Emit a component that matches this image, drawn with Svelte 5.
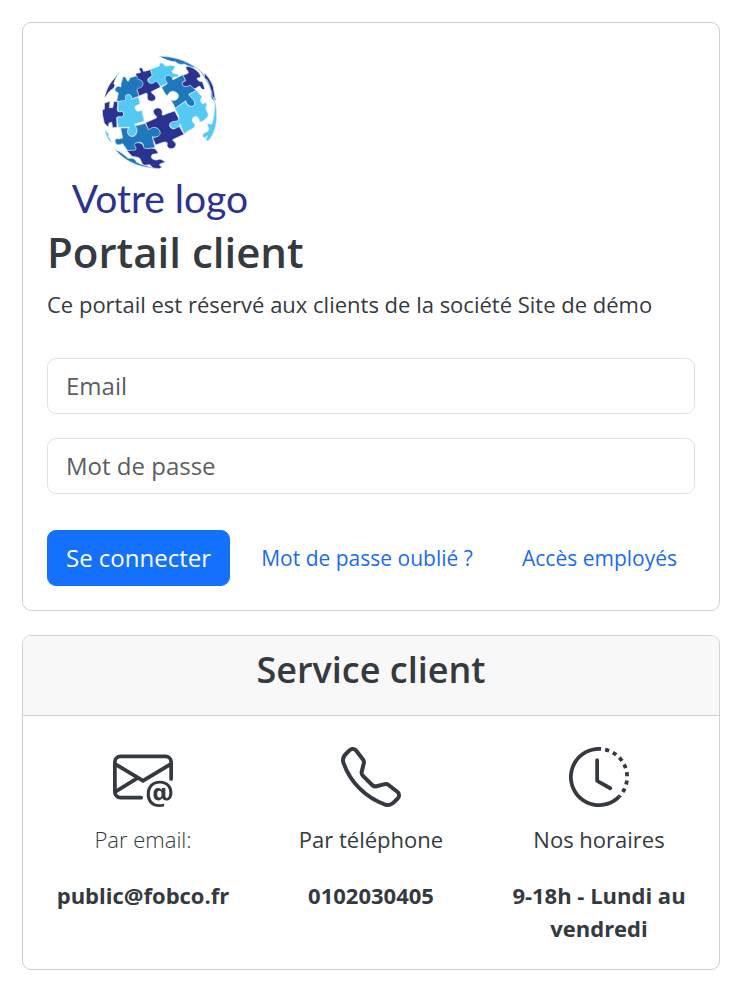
<script lang="ts">
  let email = ''
  let password = ''

  // Puzzle pieces of the globe, back to front.
  const NAVY = '#2b328f'
  const BLUE = '#1f78bc'
  const SKY = '#54c9f3'

  const pieces = [
    { fill: BLUE, d: 'M207 34 C244 33 290 46 320 70 C306 66 292 63 283 57 C274 60 262 57 258 51 C242 50 222 43 207 34 Z' },
    { fill: BLUE, d: 'M314 64 C342 83 364 115 374 152 L378 166 L370 166 L364 158 C362 148 365 143 361 132 C353 111 338 84 314 64 Z' },
    { fill: SKY, d: 'M370 152 C379 179 383 211 378 237 C374 258 366 275 356 286 C353 290 347 287 349 281 L353 272 C346 279 339 279 338 272 C338 265 345 263 352 260 C359 254 357 247 353 243 C350 235 359 234 364 239 C375 219 376 179 370 152 Z' },
    { fill: SKY, d: 'M181 73 L204 65 C211 63 206 56 213 54 C222 54 221 61 227 63 C235 64 244 59 254 64 C257 73 246 73 246 80 C249 88 259 85 266 90 C267 97 252 94 247 100 L249 108 L214 124 L207 119 C200 115 194 126 182 119 C172 113 171 101 181 97 C187 94 187 88 181 73 Z' },
    { fill: NAVY, d: 'M138 85 L151 83 C153 78 146 75 148 70 C151 66 158 68 159 74 C158 80 162 79 168 78 L181 74 L186 91 C184 98 172 97 173 106 C175 118 188 118 194 111 C202 106 207 119 212 126 L184 140 C183 146 198 150 197 159 C196 169 180 173 173 163 C170 155 175 147 169 144 L147 153 L137 124 Z' },
    { fill: BLUE, d: 'M93 116 C98 104 96 95 103 95 C112 98 108 108 115 109 L120 98 L138 93 C145 91 139 105 148 104 C157 105 162 114 157 123 C152 133 142 126 141 134 L147 154 L124 162 L124 170 L80 169 L85 145 C82 138 74 142 75 134 C77 124 85 122 93 126 Z' },
    { fill: NAVY, d: 'M88 82 C77 99 73 108 71 117 C79 119 72 128 67 133 C57 136 52 150 44 159 C48 135 58 117 69 105 Z' },
    { fill: NAVY, d: 'M44 174 L60 169 L58 188 L68 188 L72 169 L83 170 L82 195 C82 203 89 198 96 199 C104 203 102 217 95 216 C87 216 81 213 80 219 L81 247 L68 248 L65 232 L57 234 L55 246 L43 235 L38 211 L37 195 L43 193 Z' },
    { fill: SKY, d: 'M84 170 L105 166 C111 164 101 153 110 149 C119 145 130 154 123 163 L145 156 L150 174 C149 182 135 177 135 188 C137 200 147 202 155 195 L163 229 L133 237 C145 246 143 269 128 274 C115 275 107 261 118 247 L85 247 L81 218 C87 212 95 220 99 213 C104 203 98 197 90 201 C82 202 85 185 84 170 Z' },
    { fill: BLUE, d: 'M215 127 L230 118 C238 113 220 107 227 95 C236 86 249 95 248 105 L279 89 L286 105 C288 111 277 105 277 116 C280 126 291 126 300 119 L306 122 L318 137 L296 148 C300 157 318 164 314 178 C307 191 291 182 287 167 L256 190 L243 164 C255 171 268 161 265 149 C259 138 242 134 236 146 C228 159 229 146 223 142 Z' },
    { fill: NAVY, d: 'M279 91 L292 86 C303 81 280 71 291 64 C303 64 317 73 327 84 C333 92 334 98 322 99 C319 103 326 111 337 110 L344 130 C341 139 333 130 329 123 C321 125 316 135 309 128 L300 120 C291 128 275 125 277 115 C278 107 290 111 286 104 Z' },
    { fill: NAVY, d: 'M343 84 C354 94 365 111 370 126 L375 158 C368 161 365 149 366 141 C360 133 360 116 350 103 L344 100 Z' },
    { fill: SKY, d: 'M255 191 L286 169 C290 185 306 190 314 178 C318 163 296 158 298 147 L321 136 C326 147 330 149 336 155 C328 165 333 175 340 177 C346 170 350 175 350 181 C344 189 350 194 355 210 C350 221 341 229 329 231 C328 221 322 211 313 215 C305 219 303 229 313 236 C318 245 309 251 300 254 L282 266 L270 236 C269 247 259 255 247 249 C234 244 237 227 253 229 C264 230 268 222 267 214 Z' },
    { fill: NAVY, d: 'M167 233 L199 219 C205 214 186 209 191 195 C202 183 217 190 217 202 C213 214 222 211 230 206 L254 198 L265 219 C267 230 256 228 248 230 C235 233 236 247 247 251 C256 256 269 237 271 250 L282 268 L250 283 C241 287 262 290 257 302 C252 313 235 315 231 302 C235 290 228 290 219 292 L197 300 L187 276 C198 279 210 272 208 260 C207 247 190 245 181 256 L175 254 Z' },
    { fill: BLUE, d: 'M92 249 L116 249 C108 260 113 274 127 275 C143 273 145 249 135 243 L166 235 L176 255 C185 244 203 244 210 259 C214 273 199 279 187 275 L195 308 L163 312 C155 307 167 297 151 292 C137 291 133 301 139 311 C139 320 123 320 112 316 L98 296 C91 298 80 303 77 294 C72 284 78 279 86 282 L98 279 Z' },
    { fill: NAVY, d: 'M110 317 L136 315 C144 310 130 304 135 296 C145 290 158 294 160 304 C161 314 173 310 184 310 L195 311 L204 322 C202 331 187 323 184 333 C183 343 195 347 204 344 C212 340 218 346 226 351 C217 354 208 357 208 360 L216 367 L207 371 L188 369 L180 359 L162 361 C151 354 155 339 143 337 L126 334 Z' },
    { fill: BLUE, d: 'M75 313 C91 320 105 331 114 340 C129 339 137 342 139 351 L153 358 L190 369 C148 368 102 348 75 313 Z' },
    { fill: SKY, d: 'M45 254 L57 268 L55 274 L65 290 C57 290 47 271 45 254 Z' }
  ]

  const contacts = [
    { icon: 'email', label: 'Par email:', value: 'public@fobco.fr', light: true },
    { icon: 'phone', label: 'Par téléphone', value: '0102030405', light: false },
    { icon: 'clock', label: 'Nos horaires', value: '9-18h - Lundi au vendredi', light: false }
  ]
</script>

<main>
  <section class="card login">
    <svg class="logo" viewBox="-129 6 672 540" role="img" aria-label="Votre logo">
      {#each pieces as piece}
        <path d={piece.d} fill={piece.fill} />
      {/each}
      <text x="-55" y="505">Votre logo</text>
    </svg>
    <h1>Portail client</h1>
    <p class="intro">Ce portail est réservé aux clients de la société Site de démo</p>

    <form on:submit|preventDefault>
      <input type="email" placeholder="Email" aria-label="Email" bind:value={email} />
      <input type="password" placeholder="Mot de passe" aria-label="Mot de passe" bind:value={password} />
      <div class="actions">
        <button type="submit">Se connecter</button>
        <a href="#oubli">Mot de passe oublié ?</a>
        <a href="#employes">Accès employés</a>
      </div>
    </form>
  </section>

  <section class="card">
    <header>
      <h2>Service client</h2>
    </header>
    <div class="contacts">
      {#each contacts as contact}
        <div class="contact">
          <svg class="icon" viewBox="0 0 16 16" aria-hidden="true">
            {#if contact.icon === 'email'}
              <path d="M2 2a2 2 0 0 0-2 2v8.01A2 2 0 0 0 2 14h5.5a.5.5 0 0 0 0-1H2a1 1 0 0 1-.966-.741l5.64-3.471L8 9.583l7-4.2V8.5a.5.5 0 0 0 1 0V4a2 2 0 0 0-2-2H2Zm3.708 6.208L1 11.105V5.383l4.708 2.825ZM1 4.217V4a1 1 0 0 1 1-1h12a1 1 0 0 1 1 1v.217l-7 4.2-7-4.2Z" />
              <path d="M14.247 14.269c1.01 0 1.587-.857 1.587-2.025v-.21C15.834 10.43 14.64 9 12.52 9h-.035C10.42 9 9 10.36 9 12.432v.214C9 14.82 10.438 16 12.358 16h.044c.594 0 1.018-.074 1.237-.175v-.73c-.245.11-.673.18-1.18.18h-.044c-1.334 0-2.571-.788-2.571-2.655v-.157c0-1.657 1.058-2.724 2.64-2.724h.04c1.535 0 2.484 1.05 2.484 2.326v.118c0 .975-.324 1.39-.639 1.39-.232 0-.41-.148-.41-.42v-2.19h-.906v.569h-.03c-.084-.298-.368-.63-.954-.63-.778 0-1.259.555-1.259 1.4v.528c0 .892.49 1.434 1.26 1.434.471 0 .896-.227 1.014-.643h.043c.118.42.617.648 1.12.648Zm-2.453-1.588v-.227c0-.546.227-.791.573-.791.297 0 .572.192.572.708v.367c0 .573-.253.744-.564.744-.354 0-.581-.215-.581-.8Z" />
            {:else if contact.icon === 'phone'}
              <path d="M3.654 1.328a.678.678 0 0 0-1.015-.063L1.605 2.3c-.483.484-.661 1.169-.45 1.77a17.568 17.568 0 0 0 4.168 6.608 17.569 17.569 0 0 0 6.608 4.168c.601.211 1.286.033 1.77-.45l1.034-1.034a.678.678 0 0 0-.063-1.015l-2.307-1.794a.678.678 0 0 0-.58-.122l-2.19.547a1.745 1.745 0 0 1-1.657-.459L5.482 8.062a1.745 1.745 0 0 1-.46-1.657l.548-2.19a.678.678 0 0 0-.122-.58L3.654 1.328zM1.884.511a1.745 1.745 0 0 1 2.612.163L6.29 2.98c.329.423.445.974.315 1.494l-.547 2.19a.678.678 0 0 0 .178.643l2.457 2.457a.678.678 0 0 0 .644.178l2.189-.547a1.745 1.745 0 0 1 1.494.315l2.306 1.794c.829.645.905 1.87.163 2.611l-1.034 1.034c-.74.74-1.846 1.065-2.877.702a18.634 18.634 0 0 1-7.01-4.42 18.634 18.634 0 0 1-4.42-7.009c-.362-1.03-.037-2.137.703-2.877L1.885.511z" />
            {:else}
              <path d="M8.515 1.019A7 7 0 0 0 8 1V0a8 8 0 0 1 .589.022l-.074.997zm2.004.45a7.003 7.003 0 0 0-.985-.299l.219-.976c.383.086.76.2 1.126.342l-.36.933zm1.37.71a7.01 7.01 0 0 0-.439-.27l.493-.87a8.025 8.025 0 0 1 .979.654l-.615.789a6.996 6.996 0 0 0-.418-.302zm1.834 1.79a6.99 6.99 0 0 0-.653-.796l.724-.69c.27.285.52.59.747.91l-.818.576zm.744 1.352a7.08 7.08 0 0 0-.214-.468l.893-.45a7.976 7.976 0 0 1 .45 1.088l-.95.313a7.023 7.023 0 0 0-.179-.483zm.53 2.507a6.991 6.991 0 0 0-.1-1.025l.985-.17c.067.386.106.778.116 1.17l-1 .025zm-.131 1.538c.033-.17.06-.339.081-.51l.993.123a7.957 7.957 0 0 1-.23 1.155l-.964-.267c.046-.165.086-.332.12-.501zm-.952 2.379c.184-.29.346-.594.486-.908l.914.405c-.16.36-.345.706-.555 1.038l-.845-.535zm-.964 1.205c.122-.122.239-.248.35-.378l.758.653a8.073 8.073 0 0 1-.401.432l-.707-.707z" />
              <path d="M8 1a7 7 0 1 0 4.95 11.95l.707.707A8.001 8.001 0 1 1 8 0v1z" />
              <path d="M7.5 3a.5.5 0 0 1 .5.5v5.21l3.248 1.856a.5.5 0 0 1-.496.868l-3.5-2A.5.5 0 0 1 7 9V3.5a.5.5 0 0 1 .5-.5z" />
            {/if}
          </svg>
          <p class:light={contact.light}>{contact.label}</p>
          <p><strong>{contact.value}</strong></p>
        </div>
      {/each}
    </div>
  </section>
</main>

<style>
  :global(body) {
    margin: 0;
    background: #fff;
    color: #343a40;
    font-family: 'Open Sans', 'Noto Sans', sans-serif;
    font-size: 22px;
    line-height: 33px;
  }

  main {
    display: flex;
    flex-direction: column;
    gap: 24px;
    padding: 22px;
  }

  .card {
    border: 1px solid #d0d0d0;
    border-radius: 9px;
    overflow: hidden;
  }

  .login {
    padding: 24px;
  }

  .logo {
    display: block;
    width: 224px;
    height: 180px;
  }

  .logo path {
    stroke: #d3e9f6;
    stroke-width: 2;
    stroke-linejoin: round;
  }

  .logo text {
    fill: #2b328f;
    font-family: Lato, sans-serif;
    font-size: 117px;
  }

  h1,
  h2 {
    margin: 0;
    font-weight: 600;
  }

  h1 {
    font-size: 42px;
    line-height: 50px;
  }

  .intro {
    margin: 11px 0 37px;
  }

  form {
    display: flex;
    flex-direction: column;
    gap: 24px;
  }

  input,
  button {
    box-sizing: border-box;
    height: 56px;
    padding: 0 18px 2px;
    border-radius: 9px;
    font-family: inherit;
    font-size: 24px;
  }

  input {
    width: 100%;
    border: 1px solid #dee2e6;
    background: #fff;
    color: #343a40;
  }

  input::placeholder {
    color: #5b5e62;
    opacity: 1;
  }

  .actions {
    display: flex;
    align-items: center;
    justify-content: space-between;
    margin-top: 12px;
  }

  button {
    border: 1px solid #1371fd;
    background: #1371fd;
    color: #fff;
  }

  a {
    padding: 0 18px;
    color: #1a6bf0;
    font-size: 21px;
    text-decoration: none;
  }

  header {
    padding: 12px 24px 24px;
    border-bottom: 1px solid #d0d0d0;
    background: #f8f8f8;
    text-align: center;
  }

  h2 {
    font-size: 36px;
    line-height: 43px;
  }

  .contacts {
    display: grid;
    grid-template-columns: repeat(3, 1fr);
    gap: 24px;
    padding: 31px 18px 24px;
    text-align: center;
  }

  .icon {
    display: block;
    width: 60px;
    height: 60px;
    margin: 0 auto 16px;
    fill: currentColor;
  }

  .contact p {
    margin: 0;
  }

  .contact p + p {
    margin-top: 23px;
  }

  .light {
    font-weight: 300;
  }

  strong {
    font-weight: 700;
  }
</style>
